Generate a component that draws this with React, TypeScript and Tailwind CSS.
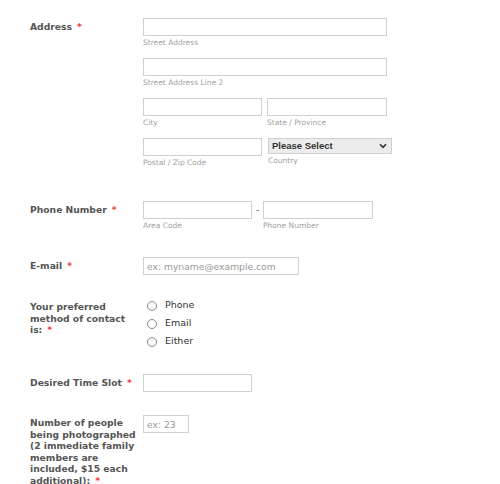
import React from "react";

const font = { fontFamily: '"DejaVu Sans", Verdana, sans-serif' };

function Label({ children, className = "" }: { children: React.ReactNode; className?: string }) {
  return (
    <div className={`w-[113px] shrink-0 pr-[6px] text-[9.2px] leading-[11.5px] font-bold text-[#555] ${className}`}>
      {children}
      <span className="ml-[5px] text-[#f23a3c]">*</span>
    </div>
  );
}

function Field({ width, sub, placeholder }: { width: string; sub?: string; placeholder?: string }) {
  return (
    <div className="flex flex-col">
      <input
        placeholder={placeholder}
        className={`${width} h-[18px] border border-[#d0d0d0] bg-white px-[3px] text-[9.2px] text-[#555] placeholder:text-[#999] outline-none`}
      />
      {sub && <span className="mt-[2px] text-[7.5px] leading-[10px] text-[#a0a0a0]">{sub}</span>}
    </div>
  );
}

function Radio({ label }: { label: string }) {
  return (
    <label className="flex items-center h-[18px]">
      <span className="ml-[4px] w-[10px] h-[10px] rounded-full border border-[#8a8a8a] bg-white" />
      <span className="ml-[8px] -mt-[2px] text-[9.5px] text-[#333]">{label}</span>
    </label>
  );
}

export default function App() {
  return (
    <div className="w-[500px] h-[484px] overflow-hidden bg-white" style={font}>
      <div className="pl-[30px] pt-[18px]">
        {/* Address */}
        <div className="flex">
          <Label className="pt-[3px]">Address</Label>
          <div className="flex flex-col gap-[10px]">
            <Field width="w-[244px]" sub="Street Address" />
            <Field width="w-[244px]" sub="Street Address Line 2" />
            <div className="flex gap-[5px]">
              <Field width="w-[119px]" sub="City" />
              <Field width="w-[120px]" sub="State / Province" />
            </div>
            <div className="flex gap-[6px]">
              <Field width="w-[119px]" sub="Postal / Zip Code" />
              <div className="flex flex-col">
                <div className="w-[124px] h-[16px] border border-[#cfcfcf] bg-[#ececec] flex items-center justify-between pl-[3px] pr-[4px]">
                  <span
                    className="text-[9.5px] font-bold text-[#333]"
                    style={{ fontFamily: '"Liberation Sans", Arial, sans-serif' }}
                  >
                    Please Select
                  </span>
                  <svg width="8" height="6" viewBox="0 0 8 6">
                    <path d="M1 1.2 L4 4.4 L7 1.2" fill="none" stroke="#333" strokeWidth="1.6" />
                  </svg>
                </div>
                <span className="mt-[2px] text-[7.5px] leading-[10px] text-[#a0a0a0]">Country</span>
              </div>
            </div>
          </div>
        </div>

        {/* Phone */}
        <div className="flex mt-[33px]">
          <Label className="pt-[3px]">Phone Number</Label>
          <div className="flex">
            <Field width="w-[109px]" sub="Area Code" />
            <span className="w-[11px] text-center text-[9px] text-[#555] leading-[18px]">-</span>
            <Field width="w-[110px]" sub="Phone Number" />
          </div>
        </div>

        {/* Email */}
        <div className="flex mt-[26px]">
          <Label className="pt-[3px]">E-mail</Label>
          <Field width="w-[156px]" placeholder="ex: myname@example.com" />
        </div>

        {/* Contact */}
        <div className="flex mt-[26px]">
          <Label>Your preferred method of contact is:</Label>
          <div className="flex flex-col -mt-[4px]">
            <Radio label="Phone" />
            <Radio label="Email" />
            <Radio label="Either" />
          </div>
        </div>

        {/* Time slot */}
        <div className="flex mt-[23px]">
          <Label className="pt-[3px]">Desired Time Slot</Label>
          <Field width="w-[109px]" />
        </div>

        {/* People */}
        <div className="flex mt-[23px]">
          <Label className="pt-[2px]">Number of people being photographed (2 immediate family members are included, $15 each additional):</Label>
          <Field width="w-[46px]" placeholder="ex: 23" />
        </div>
      </div>
    </div>
  );
}
